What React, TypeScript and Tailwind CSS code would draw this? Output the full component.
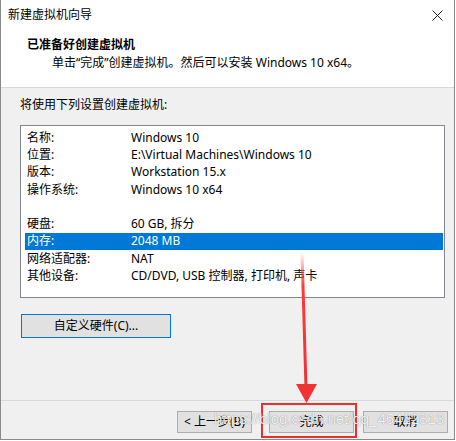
import React from "react";

const settings = [
  { label: "名称:", value: "Windows 10" },
  { label: "位置:", value: "E:\\Virtual Machines\\Windows 10" },
  { label: "版本:", value: "Workstation 15.x" },
  { label: "操作系统:", value: "Windows 10 x64" },
  { label: "", value: "" },
  { label: "硬盘:", value: "60 GB, 拆分" },
  { label: "内存:", value: "2048 MB", selected: true },
  { label: "网络适配器:", value: "NAT" },
  { label: "其他设备:", value: "CD/DVD, USB 控制器, 打印机, 声卡" },
];

const WizardButton = ({ label, className = "" }: { label: string; className?: string }) => (
  <button
    className={`h-[22px] border border-[#adadad] bg-[#e1e1e1] text-[12px] leading-none text-black ${className}`}
  >
    {label}
  </button>
);

export default function App() {
  return (
    <div className="h-[441px] w-[456px] bg-white font-['Noto_Sans','Noto_Sans_CJK_SC',sans-serif] text-[12px] text-black">
      <div className="relative flex h-[440px] w-[455px] flex-col border-x border-b border-[#8a8a8a] bg-[#f0f0f0]">
        {/* title bar + page header */}
        <div className="h-[88px] border-b border-[#d9d9d9] bg-white">
          <div className="flex h-[30px] items-center justify-between pl-[7px] pr-[11px]">
            <span>新建虚拟机向导</span>
            <svg width="11" height="11" viewBox="0 0 11 11">
              <path d="M0.5 0.5 L10.5 10.5 M10.5 0.5 L0.5 10.5" stroke="#222" strokeWidth="1" />
            </svg>
          </div>
          <div className="mt-[6px] pl-[26px] font-bold leading-[17px]">已准备好创建虚拟机</div>
          <div className="mt-[1px] pl-[51px] leading-[17px]">单击“完成”创建虚拟机。然后可以安装 Windows 10 x64。</div>
        </div>

        {/* summary */}
        <div className="flex-1 px-[19px] pt-[8px]">
          <div className="leading-[18px]">将使用下列设置创建虚拟机:</div>
          <div className="mt-[11px] h-[173px] w-[425px] border border-[#828790] bg-white pl-[4px] pr-[1px] pt-[3px]">
            {settings.map((row, i) => (
              <div
                key={i}
                className={`flex h-[17.3px] items-center pl-[2px] ${row.selected ? "bg-[#0078d7] text-white" : ""}`}
              >
                <span className="w-[104px]">{row.label}</span>
                <span>{row.value}</span>
              </div>
            ))}
          </div>
          <button className="ml-[1px] mt-[16px] h-[24px] w-[150px] border border-[#0078d7] bg-[#e1e1e1] text-[12px] leading-none">
            自定义硬件(C)...
          </button>
        </div>

        {/* footer buttons */}
        <div className="flex h-[39px] items-start justify-end border-t border-[#d9d9d9] pr-[6px] pt-[10px]">
          <WizardButton label="< 上一步(B)" className="w-[75px]" />
          <WizardButton label="完成" className="ml-[17px] w-[85px]" />
          <WizardButton label="取消" className="ml-[9px] w-[85px]" />
        </div>

        {/* annotation: arrow + highlight box */}
        <svg className="pointer-events-none absolute left-0 top-0" width="455" height="440">
          <defs>
            <linearGradient id="shaft" x1="0" y1="0" x2="0" y2="1">
              <stop offset="0" stopColor="#ff3b3b" stopOpacity="0" />
              <stop offset="0.25" stopColor="#ff3b3b" stopOpacity="1" />
              <stop offset="1" stopColor="#f03232" stopOpacity="1" />
            </linearGradient>
          </defs>
          <polygon points="299.5,252 302.5,252 306.5,388 303.5,388" fill="url(#shaft)" />
          <polygon points="295,384 316,384 305.5,403" fill="#f03232" />
        </svg>
        <div className="pointer-events-none absolute left-[260px] top-[403px] h-[35px] w-[96px] border-2 border-[#e8302f]" />

        <span className="pointer-events-none absolute left-[213px] top-[411px] whitespace-nowrap font-['Liberation_Sans',sans-serif] text-[15px] leading-[15px] text-white/90 [text-shadow:0_0_1px_rgba(0,0,0,0.55)]">
          https://blog.csdn.net/qq_45412813
        </span>
      </div>
    </div>
  );
}
